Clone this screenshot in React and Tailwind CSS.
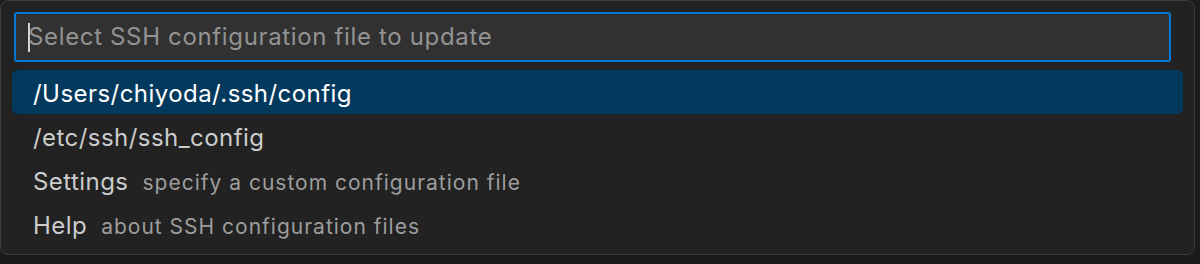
import React from 'react';

const items = [
  { label: '/Users/chiyoda/.ssh/config', selected: true },
  { label: '/etc/ssh/ssh_config' },
  { label: 'Settings', description: 'specify a custom configuration file' },
  { label: 'Help', description: 'about SSH configuration files' },
];

export default function App() {
  return (
    <div
      className="w-[1200px] h-[264px] bg-[#1b1b1b] overflow-hidden"
      style={{ fontFamily: 'Inter, "Noto Sans", sans-serif' }}
    >
      <div className="w-[1195px] h-[255px] bg-[#222222] border border-[#3c3c3c] rounded-[8px] pt-[11px] pl-[11px] pr-[11px]">
        <div className="ml-[2px] w-[1157px] h-[50px] bg-[#313131] border-2 border-[#0078d4] rounded-[3px] flex items-center pl-[12px]">
          <span className="w-[2px] h-[29px] bg-[#d4d4d4] mr-[-2px]" />
          <span className="text-[24px] text-[#939393] tracking-[0.65px]">Select SSH configuration file to update</span>
        </div>
        <div className="mt-[8px] flex flex-col">
          {items.map((item) => (
            <div
              key={item.label}
              className={`h-[44px] w-[1171px] flex items-baseline pt-[6px] pl-[21px] rounded-[6px] ${
                item.selected ? 'bg-[#04395e] text-white' : 'text-[#cccccc]'
              }`}
            >
              <span className="text-[24px] tracking-[0.45px]">{item.label}</span>
              <span className="ml-[14px] text-[21px] text-[#9d9d9d] tracking-[1px]">{item.description}</span>
            </div>
          ))}
        </div>
      </div>
    </div>
  );
}
